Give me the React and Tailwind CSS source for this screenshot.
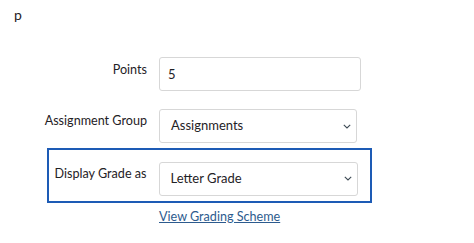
import React from 'react';

const Chevron = () => (
  <svg width="8" height="5" viewBox="0 0 8 5" fill="none" className="shrink-0">
    <path d="M0.8 0.8 L4 3.9 L7.2 0.8" stroke="#3d4a54" strokeWidth="1.1" />
  </svg>
);

const SelectBox = ({ value, width }) => (
  <div
    className={`${width} h-[34px] flex items-center justify-between pl-[11px] pr-[5px] border border-[#d7d7d7] rounded-[3px] bg-white text-[13px]`}
  >
    <span>{value}</span>
    <Chevron />
  </div>
);

const App = () => {
  return (
    <div className="w-[474px] h-[243px] bg-white text-[#1f2226] font-['Lato','Liberation_Sans',sans-serif] overflow-hidden">
      <div className="pl-[14px] pt-[7px] text-[14px] leading-[16px]">p</div>

      <div className="mt-[34px]">
        {/* Points */}
        <div className="flex items-start">
          <label className="w-[147px] text-right text-[12.6px] leading-[16px] pt-[5px]">Points</label>
          <div className="ml-[12px] w-[202px] h-[34px] flex items-center pl-[8px] pt-[2px] border border-[#d7d7d7] rounded-[3px] text-[13px]">
            5
          </div>
        </div>

        {/* Assignment Group */}
        <div className="flex items-start mt-[18px]">
          <label className="w-[147px] text-right text-[12.6px] leading-[16px] pt-[4px]">Assignment Group</label>
          <div className="ml-[12px]">
            <SelectBox value="Assignments" width="w-[198px]" />
          </div>
        </div>

        {/* Display Grade as */}
        <div className="ml-[47px] mt-[5px] w-[325px] border-[2.5px] border-[#1d5bb5] flex items-start pt-[11.5px] pb-[5.5px]">
          <label className="w-[97.5px] text-right text-[12.6px] leading-[16px] pt-[4px]">Display Grade as</label>
          <div className="ml-[12px]">
            <SelectBox value="Letter Grade" width="w-[199px]" />
          </div>
        </div>

        <div className="pl-[159px] mt-[6px] text-[12.6px] leading-[16px]">
          <a href="#" className="text-[#2d5b8e] underline">View Grading Scheme</a>
        </div>
      </div>
    </div>
  );
};

export default App;
